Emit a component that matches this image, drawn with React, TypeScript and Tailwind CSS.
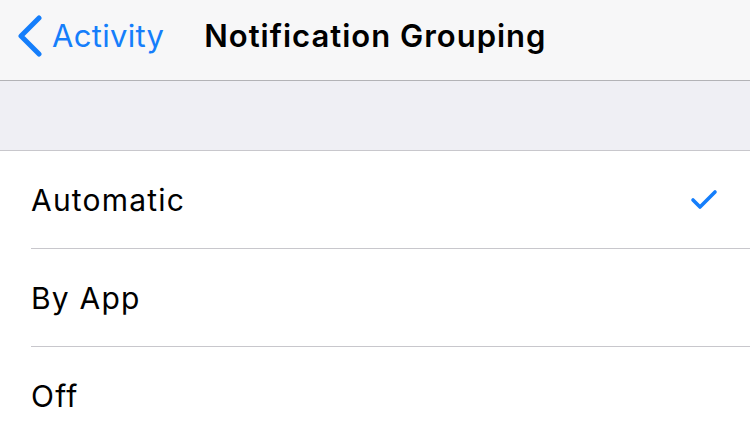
import { useState } from 'react'

const options = ['Automatic', 'By App', 'Off']

export default function App() {
  const [selected, setSelected] = useState('Automatic')

  return (
    <div className="w-[750px] h-[443px] overflow-hidden bg-white font-['Inter',sans-serif] text-black">
      <header className="relative h-[81px] bg-[#f7f7f8] border-b border-[#b3b3b6] flex items-center pb-[10px]">
        <button className="flex items-center pl-[17px] text-[#157efb]">
          <svg width="26" height="42" viewBox="0 0 26 42" fill="none" className="mt-[1px]">
            <path d="M22 3 L4 21 L22 39" stroke="currentColor" strokeWidth="5" strokeLinecap="round" strokeLinejoin="round" />
          </svg>
          <span className="ml-[9px] text-[31px] tracking-[0.3px] leading-none">Activity</span>
        </button>
        <h1 className="ml-[40px] text-[31px] font-semibold tracking-[1px] leading-none">Notification Grouping</h1>
      </header>

      <div className="h-[70px] bg-[#efeff4] border-b border-[#c8c7cc]" />

      <ul className="bg-white">
        {options.map((opt, i) => (
          <li key={opt} onClick={() => setSelected(opt)} className="pl-[31px] cursor-pointer">
            <div className={`h-[98px] flex items-center pr-[32px] ${i < options.length - 1 ? 'border-b border-[#c8c7cc]' : ''}`}>
              <span className="flex-1 text-[30px] leading-none tracking-[1.2px]">{opt}</span>
              {selected === opt && (
                <svg width="28" height="22" viewBox="0 0 28 22" fill="none">
                  <path d="M3 11 L10 18 L25 3" stroke="#157efb" strokeWidth="3.6" strokeLinecap="round" strokeLinejoin="round" />
                </svg>
              )}
            </div>
          </li>
        ))}
      </ul>
    </div>
  )
}
